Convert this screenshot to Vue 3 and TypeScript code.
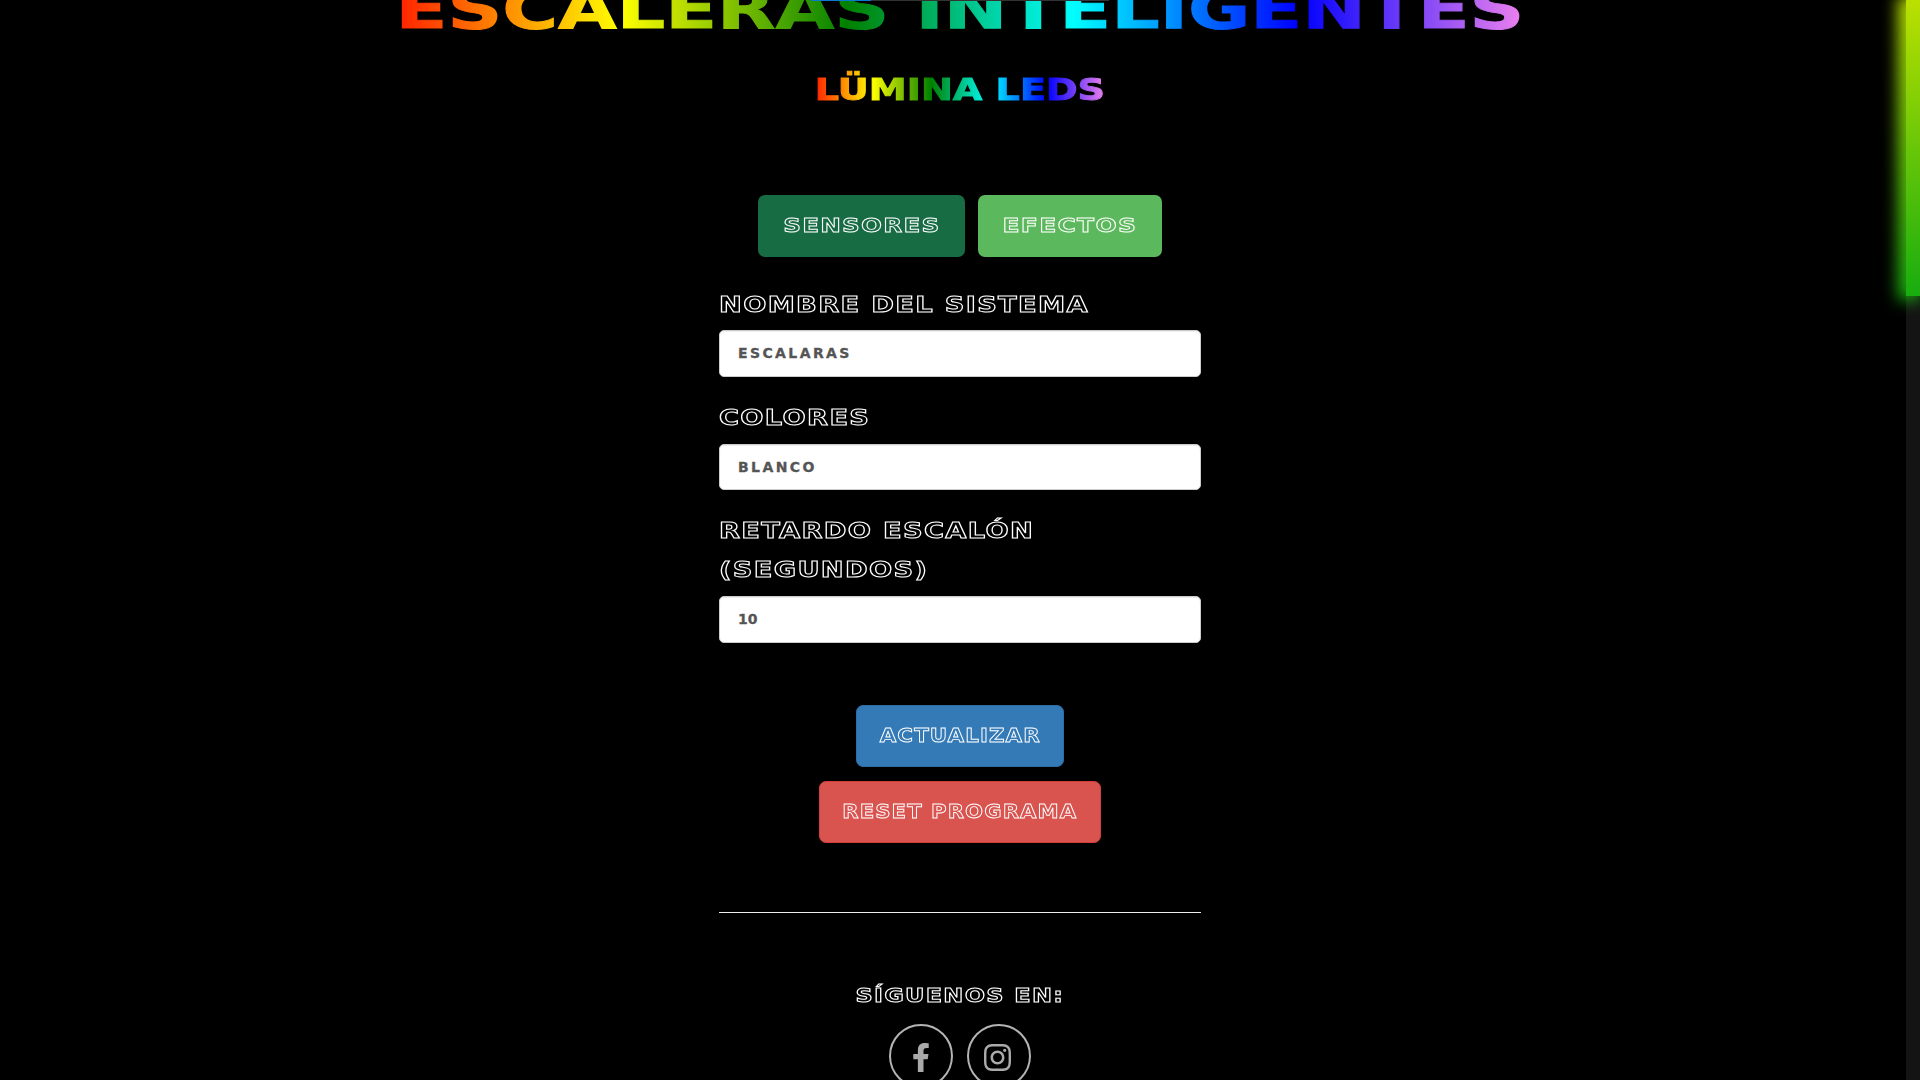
<script setup lang="ts">
interface Field {
  id: string
  label: string
  value: string
  tight?: boolean
}

const fields: Field[] = [
  { id: 'nombre', label: 'NOMBRE DEL SISTEMA', value: 'ESCALARAS' },
  { id: 'colores', label: 'COLORES', value: 'BLANCO' },
  { id: 'retardo', label: 'RETARDO ESCALÓN (SEGUNDOS)', value: '10', tight: true }
]
</script>

<template>
  <div class="page">
    <div class="progress"><span class="progress-fill"></span></div>

    <header class="head">
      <h1 class="title"><span class="title-text">ESCALERAS INTELIGENTES</span></h1>
      <h2 class="subtitle"><span class="subtitle-text">LÜMINA LEDS</span></h2>
    </header>

    <main class="panel">
      <nav class="tabs">
        <button class="btn btn-sensores" type="button"><span class="t t-sensores">SENSORES</span></button>
        <button class="btn btn-efectos" type="button"><span class="t t-efectos">EFECTOS</span></button>
      </nav>

      <form class="form" @submit.prevent>
        <div v-for="f in fields" :key="f.id" class="field">
          <label class="label" :for="f.id">{{ f.label }}</label>
          <input :id="f.id" class="input" :class="{ tight: f.tight }" type="text" :value="f.value" />
        </div>

        <div class="actions">
          <button class="btn btn-update" type="button"><span class="t t-update">ACTUALIZAR</span></button>
          <button class="btn btn-reset" type="button"><span class="t t-reset">RESET PROGRAMA</span></button>
        </div>
      </form>

      <hr class="rule" />

      <section class="social">
        <p class="follow"><span class="t t-follow">SÍGUENOS EN:</span></p>
        <div class="circles">
          <a class="circle" href="#" aria-label="Facebook">
            <svg class="fb" viewBox="0 0 320 512"><path fill="currentColor" d="M279.14 288l14.22-92.66h-88.91v-60.13c0-25.35 12.42-50.06 52.24-50.06h40.42V6.26S260.43 0 225.36 0c-73.22 0-121.08 44.38-121.08 124.72v70.62H22.89V288h81.39v224h100.17V288z"/></svg>
          </a>
          <a class="circle" href="#" aria-label="Instagram">
            <svg class="ig" viewBox="0 0 448 512"><path fill="currentColor" d="M224.1 141c-63.6 0-114.9 51.3-114.9 114.9s51.3 114.9 114.9 114.9S339 319.5 339 255.9 287.7 141 224.1 141zm0 189.6c-41.1 0-74.7-33.5-74.7-74.7s33.5-74.7 74.7-74.7 74.7 33.5 74.7 74.7-33.6 74.7-74.7 74.7zm146.4-194.3c0 14.9-12 26.8-26.8 26.8-14.9 0-26.8-12-26.8-26.8s12-26.8 26.8-26.8 26.8 12 26.8 26.8zm76.1 27.2c-1.7-35.9-9.9-67.7-36.2-93.9-26.2-26.2-58-34.4-93.9-36.2-37-2.1-147.9-2.1-184.9 0-35.8 1.7-67.6 9.9-93.9 36.1s-34.4 58-36.2 93.9c-2.1 37-2.1 147.9 0 184.9 1.7 35.9 9.9 67.7 36.2 93.9s58 34.4 93.9 36.2c37 2.1 147.9 2.1 184.9 0 35.9-1.7 67.7-9.9 93.9-36.2 26.2-26.2 34.4-58 36.2-93.9 2.1-37 2.1-147.8 0-184.8zM398.8 388c-7.8 19.6-22.9 34.7-42.6 42.6-29.5 11.7-99.5 9-132.1 9s-102.7 2.6-132.1-9c-19.6-7.8-34.7-22.9-42.6-42.6-11.7-29.5-9-99.5-9-132.1s-2.6-102.7 9-132.1c7.8-19.6 22.9-34.7 42.6-42.6 29.5-11.7 99.5-9 132.1-9s102.7-2.6 132.1 9c19.6 7.8 34.7 22.9 42.6 42.6 11.7 29.5 9 99.5 9 132.1s2.7 102.7-9 132.1z"/></svg>
          </a>
        </div>
      </section>
    </main>

    <aside class="scroll-track" aria-hidden="true">
      <div class="scroll-thumb"></div>
    </aside>
  </div>
</template>

<style scoped>
* { box-sizing: border-box; }

.page {
  position: relative;
  height: 100vh;
  overflow: hidden;
  background: #000;
  font-family: "DejaVu Sans", sans-serif;
  font-weight: 700;
}

.progress {
  position: absolute;
  top: 0;
  left: 811px;
  width: 298px;
  height: 1px;
  background: #333;
  z-index: 2;
}
.progress-fill {
  display: block;
  width: 20%;
  height: 100%;
  background: #0a7ad0;
}

.head {
  display: flex;
  flex-direction: column;
  align-items: center;
}
.title {
  margin: -21.4px 0 0;
  line-height: 60px;
  font-size: 56px;
  font-weight: 700;
  white-space: nowrap;
}
.title-text,
.subtitle-text {
  display: inline-block;
  background: linear-gradient(90deg, #ff2000, #ffff00, #008000, #00ffff, #0000ff, #ee82ee);
  -webkit-background-clip: text;
  background-clip: text;
  color: transparent;
  -webkit-text-stroke: 1px transparent;
}
.title-text {
  transform: scaleX(1.357);
}
.subtitle {
  margin: 30.4px 0 0;
  line-height: 40px;
  font-size: 31px;
  font-weight: 700;
  white-space: nowrap;
}
.subtitle-text {
  transform: scaleX(1.23);
}

.panel {
  width: 482px;
  margin: 86px auto 0;
}

.tabs {
  display: flex;
  justify-content: center;
  gap: 13px;
  margin-bottom: 29px;
}

.btn {
  display: flex;
  align-items: center;
  justify-content: center;
  height: 62px;
  padding: 0 0 2px;
  border: 1px solid transparent;
  border-radius: 7px;
  font: inherit;
  color: #fff;
  cursor: pointer;
}
.btn-sensores { width: 207px; background: #186c44; }
.btn-efectos { width: 184px; background: #5cb85c; }
.btn-update { width: 208px; background: #337ab7; border-color: #2e6da4; }
.btn-reset { width: 282px; background: #d9534f; border-color: #d43f3a; }

.t {
  display: inline-block;
  font-size: 20px;
  letter-spacing: 1px;
  white-space: nowrap;
  color: transparent;
  -webkit-text-stroke: 0.9px #fff;
}
.t-sensores { transform: scaleX(1.23); }
.t-efectos { transform: scaleX(1.25); }
.t-update { transform: scaleX(1.07); }
.t-reset { transform: scaleX(1.06); }
.t-follow {
  transform: scaleX(1.26);
  font-size: 19px;
  color: #000;
  -webkit-text-stroke: 1px #fff;
}

.field + .field { margin-top: 22px; }
.label {
  display: block;
  width: 371px;
  margin-bottom: 6px;
  font-size: 21px;
  line-height: 39px;
  letter-spacing: 1px;
  color: #000;
  -webkit-text-stroke: 1px #fff;
  transform: scaleX(1.3);
  transform-origin: left center;
}
.field:first-child .label { margin-bottom: 5px; }

.input {
  display: block;
  width: 100%;
  height: 46.5px;
  padding: 0 18px;
  border: 1px solid #ccc;
  border-radius: 5px;
  background: #fff;
  box-shadow: inset 0 1px 1px rgba(0, 0, 0, 0.075);
  font-family: inherit;
  font-weight: 700;
  font-size: 14px;
  letter-spacing: 2.4px;
  color: #555;
  -webkit-text-stroke: 0.3px #555;
  outline: none;
}
.input.tight { letter-spacing: 0; }

.actions {
  display: flex;
  flex-direction: column;
  align-items: center;
  gap: 14px;
  margin-top: 62.5px;
}

.rule {
  margin: 69px 0 0;
  height: 1px;
  border: 0;
  background: #eee;
}

.social {
  display: flex;
  flex-direction: column;
  align-items: center;
}
.follow {
  margin: 68.5px 0 0;
  line-height: 26px;
  white-space: nowrap;
}
.circles {
  display: flex;
  gap: 14px;
  margin-top: 14.5px;
}
.circle {
  display: flex;
  align-items: center;
  justify-content: center;
  width: 64px;
  height: 64px;
  border: 2px solid #b4b4b4;
  border-radius: 50%;
  color: #aaa;
}
.fb { width: 18px; height: 29px; margin-top: 2px; }
.ig { width: 27px; height: 31px; margin: 2px 3px 0 0; }

.scroll-track {
  position: absolute;
  top: 0;
  right: 0;
  z-index: 1;
  width: 14px;
  height: 100%;
  background: #141414;
}
.scroll-thumb {
  position: relative;
  height: 296px;
  background: linear-gradient(180deg, #bbe000, #17ad0f);
}
.scroll-thumb::before {
  content: "";
  position: absolute;
  inset: -4px 0 -4px -8px;
  z-index: -1;
  background: linear-gradient(180deg, #bbe000, #17ad0f);
  filter: blur(8px);
}
</style>

<style>
html, body {
  margin: 0;
  background: #000;
}
</style>
